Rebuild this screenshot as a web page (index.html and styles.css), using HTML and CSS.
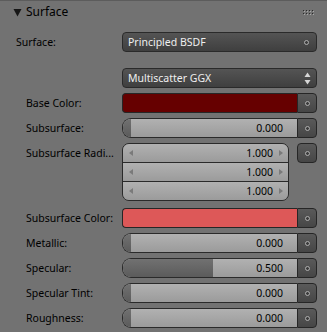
FILE: index.html
```html
<!DOCTYPE html>
<html>
<head>
<meta charset="utf-8">
<link rel="stylesheet" href="styles.css">
</head>
<body>
<div class="panel">
  <div class="header">
    <svg class="tri" width="9" height="9" viewBox="0 0 9 9"><polygon points="0.5,1 8.5,1 4.5,8.5" fill="#161616"/></svg>
    <span class="title">Surface</span>
    <svg class="grip" width="12" height="6" viewBox="0 0 12 6">
      <g fill="#2a2a2a"><rect x="0" y="0" width="1" height="1"/><rect x="3" y="0" width="1" height="1"/><rect x="6" y="0" width="1" height="1"/><rect x="9" y="0" width="1" height="1"/><rect x="0" y="3" width="1" height="1"/><rect x="3" y="3" width="1" height="1"/><rect x="6" y="3" width="1" height="1"/><rect x="9" y="3" width="1" height="1"/></g>
      <g fill="#a8a8a8"><rect x="1" y="1" width="1" height="1"/><rect x="4" y="1" width="1" height="1"/><rect x="7" y="1" width="1" height="1"/><rect x="10" y="1" width="1" height="1"/><rect x="1" y="4" width="1" height="1"/><rect x="4" y="4" width="1" height="1"/><rect x="7" y="4" width="1" height="1"/><rect x="10" y="4" width="1" height="1"/></g>
    </svg>
  </div>
  <div class="rows">
    <div class="row first">
      <div class="label outer">Surface:</div>
      <div class="menu"><span>Principled BSDF</span><span class="dot"></span></div>
    </div>
    <div class="row dist">
      <div class="label"></div>
      <div class="menu"><span>Multiscatter GGX</span>
        <svg class="updown" width="7" height="13" viewBox="0 0 7 13"><polygon points="3.5,0.5 6.5,5 0.5,5" fill="#d6d6d6"/><polygon points="0.5,8 6.5,8 3.5,12.5" fill="#d6d6d6"/></svg>
      </div>
    </div>
    <div class="row">
      <div class="label">Base Color:</div>
      <div class="joined"><div class="swatch base"></div><div class="sock"><span class="dot"></span></div></div>
    </div>
    <div class="row">
      <div class="label">Subsurface:</div>
      <div class="joined"><div class="slider"><div class="fill" style="width:8px"></div><span class="val">0.000</span></div><div class="sock"><span class="dot"></span></div></div>
    </div>
    <div class="row vecrow">
      <div class="label top">Subsurface Radi...</div>
      <div class="vecwrap">
        <div class="vector">
          <div class="vcell"><span class="la"></span><span class="vval">1.000</span><span class="ra"></span></div>
          <div class="vcell"><span class="la"></span><span class="vval">1.000</span><span class="ra"></span></div>
          <div class="vcell"><span class="la"></span><span class="vval">1.000</span><span class="ra"></span></div>
        </div>
        <div class="sock single"><span class="dot"></span></div>
      </div>
    </div>
    <div class="row sscolor">
      <div class="label">Subsurface Color:</div>
      <div class="joined"><div class="swatch salmon"></div><div class="sock"><span class="dot"></span></div></div>
    </div>
    <div class="row">
      <div class="label">Metallic:</div>
      <div class="joined"><div class="slider"><div class="fill" style="width:8px"></div><span class="val">0.000</span></div><div class="sock"><span class="dot"></span></div></div>
    </div>
    <div class="row">
      <div class="label">Specular:</div>
      <div class="joined"><div class="slider"><div class="fill" style="width:90px"></div><span class="val">0.500</span></div><div class="sock"><span class="dot"></span></div></div>
    </div>
    <div class="row">
      <div class="label">Specular Tint:</div>
      <div class="joined"><div class="slider"><div class="fill" style="width:8px"></div><span class="val">0.000</span></div><div class="sock"><span class="dot"></span></div></div>
    </div>
    <div class="row">
      <div class="label">Roughness:</div>
      <div class="joined"><div class="slider"><div class="fill" style="width:8px"></div><span class="val">0.000</span></div><div class="sock"><span class="dot"></span></div></div>
    </div>
  </div>
</div>
</body>
</html>
```

FILE: styles.css
```css
* { box-sizing: border-box; }
html, body { margin: 0; padding: 0; }
body {
  width: 327px;
  height: 332px;
  overflow: hidden;
  background: #727272;
  font-family: "Noto Sans", "Open Sans", "DejaVu Sans", sans-serif;
  font-size: 10.5px;
  color: #000;
}
.panel {
  width: 327px;
  height: 332px;
  border-top: 1px solid #5c5c5c;
  display: flex;
  flex-direction: column;
}
.header {
  height: 21px;
  display: flex;
  align-items: center;
  padding: 0 12px 0 13px;
}
.tri { display: block; margin-right: 4px; margin-top: 1px; }
.title { flex: 1; font-size: 12px; line-height: 12px; }
.grip { display: block; margin-top: 3px; }

.rows {
  display: flex;
  flex-direction: column;
  padding: 10px 10px 0 0;
}
.row {
  display: grid;
  grid-template-columns: 122px 1fr;
  height: 20px;
  align-items: center;
  margin-top: 5px;
}
.row.first { margin-top: 0; }
.row.dist { margin-top: 16px; }
.row.vecrow { height: 58px; align-items: start; }
.row.sscolor { margin-top: 7px; }
.label {
  padding-left: 26px;
  white-space: nowrap;
  line-height: 20px;
}
.label.outer { padding-left: 16px; }

.menu {
  height: 20px;
  border: 1px solid #2a2a2a;
  border-radius: 4px;
  background: linear-gradient(#545454, #3f3f3f);
  color: #efefef;
  display: flex;
  align-items: center;
  justify-content: space-between;
  padding: 0 7px 0 5px;
}
.updown { display: block; margin-right: -2px; }

.dot {
  display: block;
  width: 5px;
  height: 5px;
  border-radius: 50%;
  border: 1px solid #b0b0b0;
  background: #3c3c3c;
}

.joined {
  display: flex;
  height: 20px;
}
.swatch {
  flex: 1;
  border: 1px solid #262626;
  border-right: none;
  border-radius: 4px 0 0 4px;
}
.swatch.base { background: #660000; }
.swatch.salmon { background: #dd5858; }
.sock {
  width: 20px;
  border: 1px solid #262626;
  border-radius: 0 4px 4px 0;
  background: linear-gradient(#5a5a5a, #464646);
  display: flex;
  align-items: center;
  justify-content: center;
}
.sock.single {
  height: 20px;
  border-radius: 4px;
  width: 20px;
}
.slider {
  flex: 1;
  position: relative;
  overflow: hidden;
  border: 1px solid #2a2a2a;
  border-right: none;
  border-radius: 9px 0 0 9px;
  background: linear-gradient(#b1b1b1, #9b9b9b);
  display: flex;
  align-items: center;
  justify-content: flex-end;
  padding-right: 14px;
}
.fill {
  position: absolute;
  left: 0;
  top: 0;
  bottom: 0;
  background: linear-gradient(#717171, #5b5b5b);
  border-right: 0;
}
.val { position: relative; }

.vecwrap {
  display: flex;
  justify-content: space-between;
  align-items: flex-start;
}
.vector {
  width: 167px;
  border: 1px solid #2a2a2a;
  border-radius: 7px;
  overflow: hidden;
  display: flex;
  flex-direction: column;
}
.vcell {
  height: 19px;
  background: linear-gradient(#b1b1b1, #9b9b9b);
  display: flex;
  align-items: center;
  padding: 0 5px 0 6px;
  border-top: 1px solid #2a2a2a;
}
.vcell:first-child { height: 18px; border-top: none; }
.vval { flex: 1; text-align: right; padding-right: 6px; }
.la, .ra {
  width: 0;
  height: 0;
  border-top: 3px solid transparent;
  border-bottom: 3px solid transparent;
}
.la { border-right: 4px solid #7a7a7a; }
.ra { border-left: 4px solid #7a7a7a; }
```
